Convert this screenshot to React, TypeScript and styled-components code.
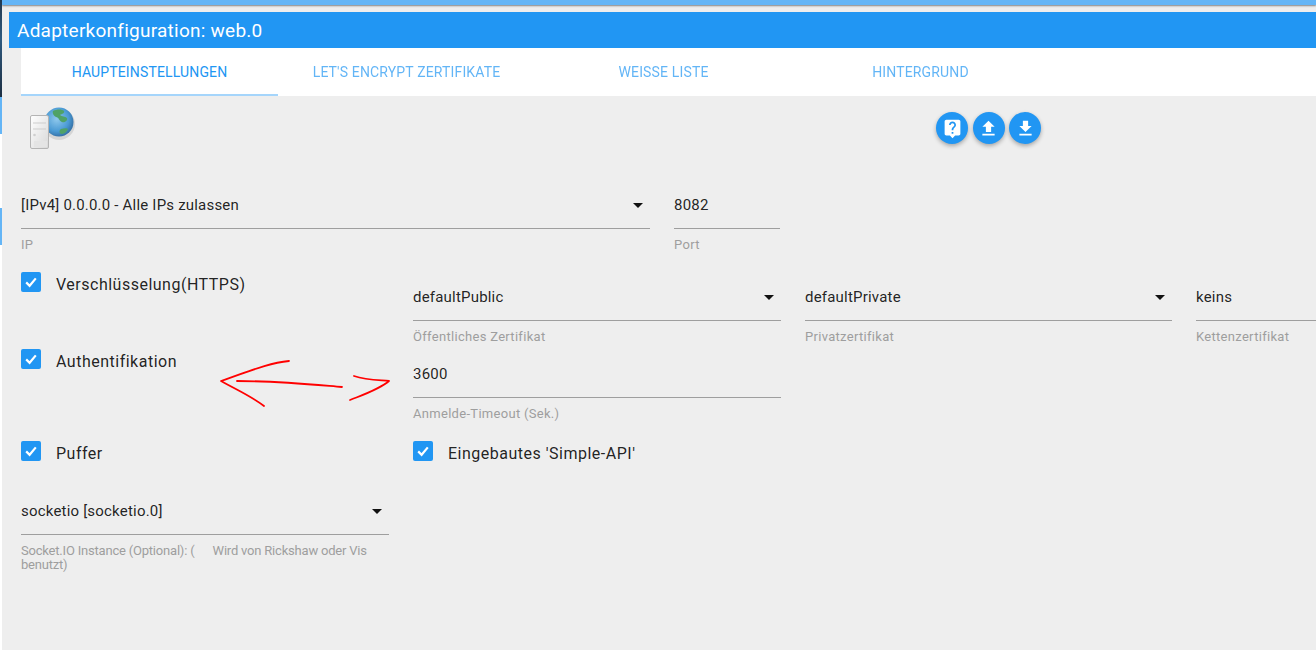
import React from "react";
import { createGlobalStyle, styled } from "styled-components";

const GlobalStyle = createGlobalStyle`
  html, body {
    margin: 0;
    padding: 0;
    background: #eeeeee;
  }
  * {
    box-sizing: border-box;
  }
`;

const Page = styled.div`
  position: relative;
  display: flex;
  width: 1316px;
  height: 650px;
  overflow: hidden;
  font-family: Roboto, "Liberation Sans", sans-serif;
  background: #eeeeee;
`;

const EdgeStrip = styled.div`
  display: flex;
  flex-direction: column;
  flex: 0 0 2px;
`;

const EdgeSegment = styled.div<{ $height: number; $color: string }>`
  flex: 0 0 ${(p) => p.$height}px;
  background: ${(p) => p.$color};
`;

const Main = styled.div`
  flex: 1 1 0;
  min-width: 0;
  overflow: hidden;
`;

const TopBar = styled.div`
  height: 5px;
  background: #64b5f6;
  box-shadow: 0 1px 2px rgba(0, 0, 0, 0.45);
`;

const Title = styled.h1`
  margin: 7px 0 0 7px;
  height: 36px;
  padding-left: 8px;
  background: #2196f3;
  color: #ffffff;
  font-size: 19px;
  font-weight: 400;
  letter-spacing: 0.25px;
  line-height: 37px;
`;

const Tabs = styled.div`
  display: flex;
  height: 48px;
  margin-left: 19px;
  background: #ffffff;
`;

const Tab = styled.div<{ $active?: boolean }>`
  flex: 0 0 257px;
  text-align: center;
  font-size: 14px;
  line-height: 48px;
  letter-spacing: 0.15px;
  text-transform: uppercase;
  color: #2196f3;
  opacity: ${(p) => (p.$active ? 1 : 0.7)};
  border-bottom: 2px solid ${(p) => (p.$active ? "#a5d5fb" : "transparent")};
`;

const Form = styled.div`
  padding-left: 19px;
`;

const Toolbar = styled.div`
  display: flex;
  align-items: flex-start;
  height: 84px;
  padding-top: 8px;
  margin-left: 5px;
`;

const Logo = styled.svg`
  flex: 0 0 50px;
  height: 50px;
  filter: blur(0.35px);
`;

const RoundButtons = styled.div`
  display: flex;
  gap: 4.5px;
  margin: 8px 0 0 860px;
`;

const RoundButton = styled.div`
  display: flex;
  align-items: center;
  justify-content: center;
  width: 32px;
  height: 32px;
  border-radius: 50%;
  background: #2196f3;
  box-shadow: 0 2px 4px rgba(0, 0, 0, 0.3);

  svg {
    width: 21px;
    height: 21px;
    fill: #ffffff;
  }
`;

const Rows = styled.div`
  display: grid;
  grid-template-rows: 92px 77px 92px 45px auto;
`;

const Row = styled.div`
  display: flex;
  gap: 24px;
`;

const Field = styled.div<{ $width: number }>`
  flex: 0 0 ${(p) => p.$width}px;
  width: ${(p) => p.$width}px;
`;

const Value = styled.div`
  display: flex;
  align-items: center;
  justify-content: space-between;
  height: 49px;
  padding: 2px 7px 0 0;
  border-bottom: 1px solid #9e9e9e;
  color: rgba(0, 0, 0, 0.87);
  font-size: 15px;
  letter-spacing: 0.2px;
`;

const Caret = styled.span`
  width: 0;
  height: 0;
  border-left: 5px solid transparent;
  border-right: 5px solid transparent;
  border-top: 5px solid #111111;
`;

const Hint = styled.div<{ $tight?: boolean }>`
  margin-top: 9px;
  color: #9e9e9e;
  font-size: 13px;
  letter-spacing: ${(p) => (p.$tight ? "-0.2px" : "0.3px")};
  line-height: 14px;
`;

const CheckField = styled.label`
  display: flex;
  flex: 0 0 368px;
  align-items: flex-start;
  gap: 15px;
  height: 20px;
  color: rgba(0, 0, 0, 0.87);
  font-size: 16px;
  letter-spacing: 0.5px;
  line-height: 25px;
`;

const CheckBox = styled.span`
  display: flex;
  align-items: center;
  justify-content: center;
  flex: 0 0 20px;
  height: 20px;
  border-radius: 2px;
  background: #2196f3;

  svg {
    width: 14px;
    height: 14px;
    fill: none;
    stroke: #ffffff;
    stroke-width: 2.2;
  }
`;

const Scribble = styled.svg`
  position: absolute;
  left: 215px;
  top: 355px;
  width: 180px;
  height: 56px;
  pointer-events: none;
  fill: none;
  stroke: #ff0000;
  stroke-width: 1.8;
  stroke-linecap: round;
  stroke-linejoin: round;
`;

type FieldProps = { value: string; hint: string; width?: number; tight?: boolean };

const Select = ({ value, hint, width = 368, tight }: FieldProps) => (
  <Field $width={width}>
    <Value>
      {value}
      <Caret />
    </Value>
    <Hint $tight={tight}>{hint}</Hint>
  </Field>
);

const Input = ({ value, hint, width = 368 }: FieldProps) => (
  <Field $width={width}>
    <Value>{value}</Value>
    <Hint>{hint}</Hint>
  </Field>
);

const Check = ({ label }: { label: string }) => (
  <CheckField>
    <CheckBox>
      <svg viewBox="0 0 14 14">
        <path d="M2.2 7.4 5.6 10.8 11.8 3.4" />
      </svg>
    </CheckBox>
    {label}
  </CheckField>
);

const WebLogo = () => (
  <Logo viewBox="0 0 50 50">
    <defs>
      <radialGradient id="globe" cx="0.42" cy="0.4" r="0.7">
        <stop offset="0" stopColor="#8fc8ec" />
        <stop offset="0.6" stopColor="#4a9ad4" />
        <stop offset="1" stopColor="#2c5f93" />
      </radialGradient>
      <linearGradient id="tower" x1="0" y1="0" x2="1" y2="1">
        <stop offset="0" stopColor="#ffffff" />
        <stop offset="1" stopColor="#d8d8d8" />
      </linearGradient>
    </defs>
    <ellipse cx="33" cy="20" rx="16" ry="16" fill="#000" opacity="0.1" />
    <circle cx="33" cy="18" r="14.5" fill="url(#globe)" />
    <path
      d="M27 7c4-2 9-2 11 0 1 2-2 3-4 4 2 2 5 1 7 3 1 3-3 5-5 4-3-1-3-5-6-5-2-1-4-4-3-6zM35 25c3-1 6-1 7 0-1 3-4 5-7 5-2-1-2-4 0-5z"
      fill="#4fa267"
    />
    <rect x="4.5" y="11.5" width="18" height="33" rx="1.5" fill="url(#tower)" stroke="#b4b4b4" />
    <path d="M7 19h13M7 25h13" stroke="#cdcdcd" fill="none" />
    <circle cx="8.5" cy="31" r="1.3" fill="#cfcfcf" />
    <rect x="8" y="37" width="13" height="6" fill="#e4e4e4" />
  </Logo>
);

const App = () => {
  return (
    <>
      <GlobalStyle />
      <Page>
        <EdgeStrip>
          <EdgeSegment $height={97} $color="linear-gradient(#22384e, #2f5a80 40%, #1d2f42)" />
          <EdgeSegment $height={37} $color="#64b5f6" />
          <EdgeSegment $height={74} $color="#ffffff" />
          <EdgeSegment $height={37} $color="#64b5f6" />
          <EdgeSegment $height={405} $color="#ffffff" />
        </EdgeStrip>
        <Main>
          <TopBar />
          <Title>Adapterkonfiguration: web.0</Title>
          <Tabs>
            <Tab $active>Haupteinstellungen</Tab>
            <Tab>Let's Encrypt Zertifikate</Tab>
            <Tab>Weisse Liste</Tab>
            <Tab>Hintergrund</Tab>
          </Tabs>
          <Form>
            <Toolbar>
              <WebLogo />
              <RoundButtons>
                <RoundButton>
                  <svg viewBox="0 0 24 24">
                    <path d="M19 2H5c-1.11 0-2 .9-2 2v14c0 1.1.89 2 2 2h4l3 3 3-3h4c1.1 0 2-.9 2-2V4c0-1.1-.9-2-2-2zm-6 16h-2v-2h2v2zm2.07-7.75l-.9.92C13.45 11.9 13 12.5 13 14h-2v-.5c0-1.1.45-2.1 1.17-2.83l1.24-1.26c.37-.36.59-.86.59-1.41 0-1.1-.9-2-2-2s-2 .9-2 2H8c0-2.21 1.79-4 4-4s4 1.79 4 4c0 .88-.36 1.68-.93 2.25z" />
                  </svg>
                </RoundButton>
                <RoundButton>
                  <svg viewBox="0 0 24 24">
                    <path d="M9 16h6v-6h4l-7-7-7 7h4zm-4 2h14v2H5z" />
                  </svg>
                </RoundButton>
                <RoundButton>
                  <svg viewBox="0 0 24 24">
                    <path d="M19 9h-4V3H9v6H5l7 7 7-7zM5 18v2h14v-2H5z" />
                  </svg>
                </RoundButton>
              </RoundButtons>
            </Toolbar>
            <Rows>
              <Row>
                <Select value="[IPv4] 0.0.0.0 - Alle IPs zulassen" hint="IP" width={629} />
                <Input value="8082" hint="Port" width={106} />
              </Row>
              <Row>
                <Check label="Verschlüsselung(HTTPS)" />
                <Select value="defaultPublic" hint="Öffentliches Zertifikat" />
                <Select value="defaultPrivate" hint="Privatzertifikat" width={367} />
                <Select value="keins" hint="Kettenzertifikat" />
              </Row>
              <Row>
                <Check label="Authentifikation" />
                <Input value="3600" hint="Anmelde-Timeout (Sek.)" />
              </Row>
              <Row>
                <Check label="Puffer" />
                <Check label="Eingebautes 'Simple-API'" />
              </Row>
              <Row>
                <Select
                  tight
                  value="socketio [socketio.0]"
                  hint={"Socket.IO Instance (Optional): (\u00a0\u00a0\u00a0\u00a0\u00a0\u00a0Wird von Rickshaw oder Vis benutzt)"}
                />
              </Row>
            </Rows>
          </Form>
        </Main>
        <Scribble viewBox="0 0 180 56">
          <path d="M74 6C52 8 30 18 6 26c16 9 30 15 43 25" />
          <path d="M22 26c40 0 80 4 105 6" />
          <path d="M139 21c12 4 24 4 35 5-9 8-24 13-39 19" />
        </Scribble>
      </Page>
    </>
  );
};

export default App;
